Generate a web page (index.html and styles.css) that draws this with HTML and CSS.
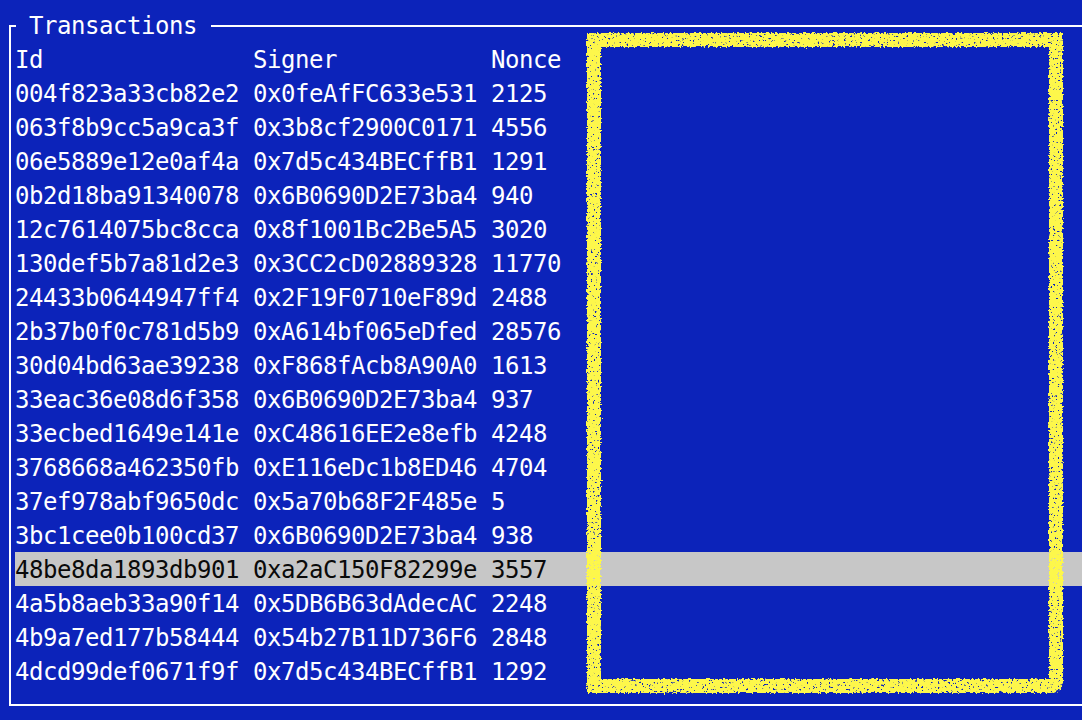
FILE: index.html
```html
<!DOCTYPE html>
<html lang="en">
<head>
<meta charset="utf-8">
<title>Transactions</title>
<link rel="stylesheet" href="styles.css">
</head>
<body>
<div class="screen">
  <section class="frame">
    <div class="frame-title"><span>Transactions</span></div>
    <div class="table">
      <div class="row head"><span>Id</span><span>Signer</span><span>Nonce</span></div>
      <div class="row"><span>004f823a33cb82e2</span><span>0x0feAfFC633e531</span><span>2125</span></div>
      <div class="row"><span>063f8b9cc5a9ca3f</span><span>0x3b8cf2900C0171</span><span>4556</span></div>
      <div class="row"><span>06e5889e12e0af4a</span><span>0x7d5c434BECffB1</span><span>1291</span></div>
      <div class="row"><span>0b2d18ba91340078</span><span>0x6B0690D2E73ba4</span><span>940</span></div>
      <div class="row"><span>12c7614075bc8cca</span><span>0x8f1001Bc2Be5A5</span><span>3020</span></div>
      <div class="row"><span>130def5b7a81d2e3</span><span>0x3CC2cD02889328</span><span>11770</span></div>
      <div class="row"><span>24433b0644947ff4</span><span>0x2F19F0710eF89d</span><span>2488</span></div>
      <div class="row"><span>2b37b0f0c781d5b9</span><span>0xA614bf065eDfed</span><span>28576</span></div>
      <div class="row"><span>30d04bd63ae39238</span><span>0xF868fAcb8A90A0</span><span>1613</span></div>
      <div class="row"><span>33eac36e08d6f358</span><span>0x6B0690D2E73ba4</span><span>937</span></div>
      <div class="row"><span>33ecbed1649e141e</span><span>0xC48616EE2e8efb</span><span>4248</span></div>
      <div class="row"><span>3768668a462350fb</span><span>0xE116eDc1b8ED46</span><span>4704</span></div>
      <div class="row"><span>37ef978abf9650dc</span><span>0x5a70b68F2F485e</span><span>5</span></div>
      <div class="row"><span>3bc1cee0b100cd37</span><span>0x6B0690D2E73ba4</span><span>938</span></div>
      <div class="row selected"><span>48be8da1893db901</span><span>0xa2aC150F82299e</span><span>3557</span></div>
      <div class="row"><span>4a5b8aeb33a90f14</span><span>0x5DB6B63dAdecAC</span><span>2248</span></div>
      <div class="row"><span>4b9a7ed177b58444</span><span>0x54b27B11D736F6</span><span>2848</span></div>
      <div class="row"><span>4dcd99def0671f9f</span><span>0x7d5c434BECffB1</span><span>1292</span></div>
    </div>
  </section>
  <svg class="scribble" width="1082" height="720" viewBox="0 0 1082 720" aria-hidden="true">
    <defs>
      <filter id="rough" x="-5%" y="-5%" width="110%" height="110%">
        <feTurbulence type="fractalNoise" baseFrequency="0.5" numOctaves="2" seed="4" result="n1"/>
        <feDisplacementMap in="SourceGraphic" in2="n1" scale="5" xChannelSelector="R" yChannelSelector="G" result="d"/>
        <feTurbulence type="fractalNoise" baseFrequency="0.45" numOctaves="2" seed="11" result="n2"/>
        <feColorMatrix in="n2" type="matrix" values="0 0 0 0 0  0 0 0 0 0  0 0 0 0 0  -12 0 0 0 8.9" result="mask"/>
        <feComposite in="d" in2="mask" operator="in"/>
      </filter>
    </defs>
    <path d="M594 40 L1056 40 L1056 680 Q1056 686 1050 686 L594 686 Z" fill="none" stroke="#fdf74b" stroke-width="14" stroke-linejoin="miter" filter="url(#rough)"/>
  </svg>
</div>
</body>
</html>
```

FILE: styles.css
```css
html, body {
  margin: 0;
  padding: 0;
}

body {
  background: #0c23ba;
  width: 1082px;
  height: 720px;
  overflow: hidden;
  font-family: "DejaVu Sans Mono", "Liberation Mono", monospace;
  font-size: 24px;
  letter-spacing: -0.45px;
  color: #ffffff;
}

.screen {
  position: relative;
  width: 1082px;
  height: 720px;
  overflow: hidden;
  padding-top: 25px;
  padding-left: 9px;
  box-sizing: border-box;
}

.frame {
  position: relative;
  width: 1200px;
  border: 2px solid #ffffff;
  border-right: none;
  padding: 15px 0 16px 4px;
  box-sizing: border-box;
}

.frame-title {
  position: absolute;
  left: 5px;
  top: -19px;
  width: 195px;
  height: 34px;
  line-height: 36px;
  background: #0c23ba;
  padding-left: 13px;
  box-sizing: border-box;
  white-space: pre;
  overflow: hidden;
}

.table {
  display: flex;
  flex-direction: column;
}

.row {
  display: grid;
  grid-template-columns: 238px 238px 1fr;
  height: 34px;
  line-height: 36px;
  white-space: pre;
}

.row.selected {
  background: #c7c7c7;
  color: #0a0a0a;
}

.scribble {
  position: absolute;
  left: 0;
  top: 0;
  pointer-events: none;
}
```
